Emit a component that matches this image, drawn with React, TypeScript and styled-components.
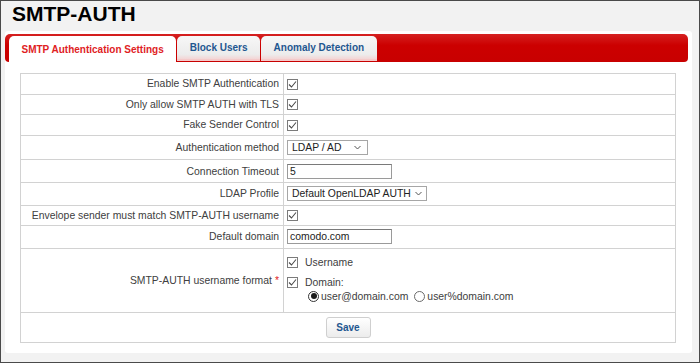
import styled, { createGlobalStyle } from 'styled-components';

const GlobalStyle = createGlobalStyle`
  html, body {
    margin: 0;
    padding: 0;
    background: #ffffff;
  }
  * {
    box-sizing: border-box;
  }
`;

const Frame = styled.div`
  width: 700px;
  height: 363px;
  border: 1px solid #4a4a4a;
  background: #f2f2f2;
  font-family: 'Liberation Sans', Arial, sans-serif;
  color: #404040;
  overflow: hidden;
`;

const PageTitle = styled.h1`
  margin: 1px 0 5px 11px;
  height: 24px;
  font-size: 21px;
  line-height: 24px;
  font-weight: 700;
  color: #000000;
`;

const Panel = styled.div`
  margin: 0 7px 0 4px;
  height: 322px;
  padding: 3px 4px 0 0;
  background: #ffffff;
  border-radius: 3px;
`;

const TabBar = styled.div`
  display: flex;
  align-items: flex-end;
  gap: 1px;
  height: 28px;
  padding: 0 0 0 4px;
  background: linear-gradient(#d52121, #cc0000 40%, #c80000);
  border-radius: 5px 5px 4px 4px;
`;

const Tab = styled.div<{ $active?: boolean }>`
  display: flex;
  align-items: center;
  height: ${({ $active }) => ($active ? '26px' : '25px')};
  margin-bottom: ${({ $active }) => ($active ? '0' : '1px')};
  padding: 0 12.5px;
  font-size: 10px;
  font-weight: 700;
  border-radius: 5px 5px 0 0;
  color: ${({ $active }) => ($active ? '#e0221f' : '#1f5790')};
  background: ${({ $active }) =>
    $active ? '#ffffff' : 'linear-gradient(#f7f7f7, #ececec 80%, #f3d6d6)'};
  border-bottom: ${({ $active }) => ($active ? 'none' : '2px solid #f4caca')};
`;

const Table = styled.table`
  margin: 11px 0 0 15px;
  width: 656px;
  border-collapse: collapse;
  border: 1px solid #d2d2d2;
  font-size: 10.4px;
`;

const Row = styled.tr<{ $h: number }>`
  height: ${({ $h }) => $h}px;
`;

const Label = styled.td`
  width: 263px;
  padding: 0 4px 0 0;
  border: 1px solid #d2d2d2;
  text-align: right;
  white-space: nowrap;
  color: #404040;
`;

const Field = styled.td`
  padding: 0 3px;
  border: 1px solid #d2d2d2;
  vertical-align: middle;
`;

const StackField = styled(Field)`
  padding: 6px 3px 9px;
  vertical-align: top;
`;

const Required = styled.span`
  color: #e02020;
  margin-left: 3px;
`;

const Box = styled.span`
  display: inline-flex;
  align-items: center;
  justify-content: center;
  width: 11px;
  height: 11px;
  border: 1px solid #7b7b7b;
  background: #ffffff;
  vertical-align: middle;
`;

const SelectBox = styled.div<{ $w: number }>`
  display: flex;
  align-items: center;
  justify-content: space-between;
  width: ${({ $w }) => $w}px;
  height: 15px;
  padding: 0 6px 0 4px;
  border: 1px solid #a6a6a6;
  background: #ffffff;
  color: #222222;
  white-space: nowrap;
`;

const TextBox = styled.div`
  display: flex;
  align-items: center;
  width: 105px;
  height: 15px;
  padding: 0 2px;
  border: 1px solid #9a9a9a;
  border-top-color: #7a7a7a;
  background: #ffffff;
  color: #222222;
`;

const OptionLine = styled.div`
  display: flex;
  align-items: center;
  gap: 7px;
  height: 14px;
  margin-bottom: 6px;
`;

const RadioLine = styled.div`
  display: flex;
  align-items: center;
  height: 12px;
  margin-top: -5px;
  padding-left: 21px;
  color: #404040;
`;

const Radio = styled.span<{ $on?: boolean }>`
  display: inline-flex;
  align-items: center;
  justify-content: center;
  width: 11px;
  height: 11px;
  margin-right: 2px;
  border-radius: 50%;
  border: 1px solid ${({ $on }) => ($on ? '#333333' : '#6a6a6a')};
  background: #ffffff;

  &::after {
    content: '';
    display: ${({ $on }) => ($on ? 'block' : 'none')};
    width: 6px;
    height: 6px;
    border-radius: 50%;
    background: #1a1a1a;
  }
`;

const RadioText = styled.span`
  margin-right: 6px;
`;

const SaveCell = styled.td`
  text-align: center;
  border: 1px solid #d2d2d2;
`;

const SaveButton = styled.button`
  width: 45px;
  height: 21px;
  padding: 0;
  border: 1px solid #cfcfcf;
  border-radius: 3px;
  background: linear-gradient(#ffffff, #ececec);
  font-family: 'Liberation Sans', Arial, sans-serif;
  font-size: 10px;
  font-weight: 700;
  color: #1f5790;
  vertical-align: middle;
`;

const Check = () => (
  <Box>
    <svg width="9" height="9" viewBox="0 0 9 9">
      <polyline points="1,4.5 3.5,7 8,1.5" fill="none" stroke="#4a4a4a" strokeWidth="1.1" />
    </svg>
  </Box>
);

const Chevron = () => (
  <svg width="7" height="5" viewBox="0 0 7 5" style={{ flexShrink: 0, marginLeft: 4 }}>
    <polyline points="0.5,1 3.5,4 6.5,1" fill="none" stroke="#555555" strokeWidth="1" />
  </svg>
);

const App = () => {
  return (
    <>
      <GlobalStyle />
      <Frame>
        <PageTitle>SMTP-AUTH</PageTitle>
        <Panel>
          <TabBar>
            <Tab $active>SMTP Authentication Settings</Tab>
            <Tab>Block Users</Tab>
            <Tab>Anomaly Detection</Tab>
          </TabBar>
          <Table>
            <tbody>
              <Row $h={20.5}>
                <Label>Enable SMTP Authentication</Label>
                <Field>
                  <Check />
                </Field>
              </Row>
              <Row $h={20.5}>
                <Label>Only allow SMTP AUTH with TLS</Label>
                <Field>
                  <Check />
                </Field>
              </Row>
              <Row $h={20.5}>
                <Label>Fake Sender Control</Label>
                <Field>
                  <Check />
                </Field>
              </Row>
              <Row $h={24.5}>
                <Label>Authentication method</Label>
                <Field>
                  <SelectBox $w={81}>
                    <span>LDAP / AD</span>
                    <Chevron />
                  </SelectBox>
                </Field>
              </Row>
              <Row $h={23}>
                <Label>Connection Timeout</Label>
                <Field>
                  <TextBox>5</TextBox>
                </Field>
              </Row>
              <Row $h={22.5}>
                <Label>LDAP Profile</Label>
                <Field>
                  <SelectBox $w={140}>
                    <span>Default OpenLDAP AUTH</span>
                    <Chevron />
                  </SelectBox>
                </Field>
              </Row>
              <Row $h={20}>
                <Label>Envelope sender must match SMTP-AUTH username</Label>
                <Field>
                  <Check />
                </Field>
              </Row>
              <Row $h={23.5}>
                <Label>Default domain</Label>
                <Field>
                  <TextBox>comodo.com</TextBox>
                </Field>
              </Row>
              <Row $h={63.5}>
                <Label>
                  SMTP-AUTH username format<Required>*</Required>
                </Label>
                <StackField>
                  <OptionLine>
                    <Check />
                    <span>Username</span>
                  </OptionLine>
                  <OptionLine>
                    <Check />
                    <span>Domain:</span>
                  </OptionLine>
                  <RadioLine>
                    <Radio $on />
                    <RadioText>user@domain.com</RadioText>
                    <Radio />
                    <RadioText>user%domain.com</RadioText>
                  </RadioLine>
                </StackField>
              </Row>
              <Row $h={30}>
                <SaveCell colSpan={2}>
                  <SaveButton>Save</SaveButton>
                </SaveCell>
              </Row>
            </tbody>
          </Table>
        </Panel>
      </Frame>
    </>
  );
};

export default App;
